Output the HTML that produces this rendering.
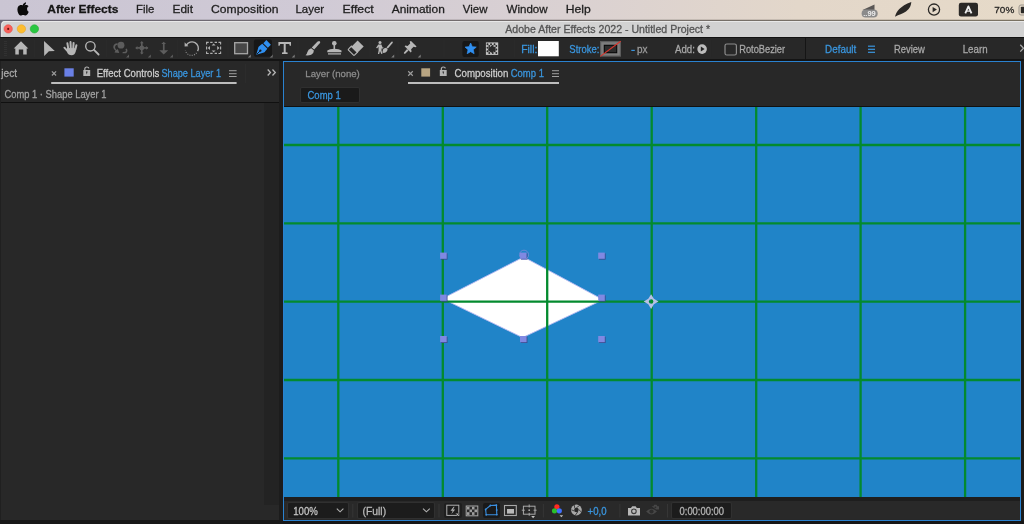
<!DOCTYPE html>
<html><head><meta charset="utf-8">
<style>
*{margin:0;padding:0;box-sizing:border-box}
html,body{width:1024px;height:524px;overflow:hidden;background:#181818;font-family:"Liberation Sans",sans-serif}
body{position:relative}
.a{position:absolute}
.ov{position:absolute;overflow:visible}
</style></head><body>

<!-- backgrounds -->
<div class="a" style="left:0;top:0;width:1024px;height:20px;background:linear-gradient(90deg,#cac5d3 0%,#d0cad6 30%,#dad1d2 55%,#e3d7ca 78%,#e6dac8 100%)"></div>
<div class="a" style="left:0;top:20px;width:1024px;height:7px;background:linear-gradient(90deg,#6e6a78,#7a7262)"></div>
<div class="a" style="left:0;top:20px;width:1024px;height:17px;background:#d2d2d2;border-top:1px solid #ededed;border-radius:5px 0 0 0"></div>
<div class="a" style="left:0;top:37px;width:1024px;height:24px;background:#282828;border-top:1px solid #121212;border-bottom:2px solid #141414"></div>

<!-- left panel -->
<div class="a" style="left:0;top:61px;width:279px;height:459px;background:#282828"></div>
<div class="a" style="left:1px;top:102px;width:278px;height:1px;background:#101010"></div>
<div class="a" style="left:264px;top:103px;width:15px;height:402px;background:#232323"></div>
<div class="a" style="left:265px;top:505px;width:14px;height:15px;background:#282828"></div>
<div class="a" style="left:245px;top:64px;width:1px;height:19px;background:#2c2c2c"></div>
<div class="a" style="left:0;top:61px;width:1px;height:463px;background:#202020"></div>

<!-- gap -->
<div class="a" style="left:279px;top:61px;width:4px;height:463px;background:#1c1c1c"></div>

<!-- comp panel -->
<div class="a" style="left:283px;top:61px;width:738px;height:460px;background:#282828;border:1px solid #2a82d0"></div>
<div class="a" style="left:1021px;top:61px;width:3px;height:463px;background:#1b1b1b"></div>
<div class="a" style="left:0;top:521px;width:1024px;height:3px;background:#161616"></div>
<div class="a" style="left:0;top:520px;width:283px;height:4px;background:#181818"></div>
<div class="a" style="left:301px;top:88px;width:58px;height:13.5px;background:#1a1a1a;border-radius:1px;box-shadow:0 0 0 1px #2f2f2f"></div>
<div class="a" style="left:284px;top:105.5px;width:736px;height:1.5px;background:#111"></div>
<!-- bottom bar -->
<div class="a" style="left:284px;top:497px;width:736px;height:22px;background:#292929;border-top:4.5px solid #1e1e1e"></div>
<div class="a" style="left:288px;top:502.7px;width:59.5px;height:15px;background:#1c1c1c;border-radius:1px;box-shadow:0 0 0 1px #303030"></div>
<div class="a" style="left:358px;top:502.7px;width:76px;height:15px;background:#1c1c1c;border-radius:1px;box-shadow:0 0 0 1px #303030"></div>
<div class="a" style="left:672.2px;top:502.9px;width:58.6px;height:15.2px;background:#1c1c1c;border-radius:1px;box-shadow:0 0 0 1px #303030"></div>
<div class="a" style="left:444px;top:503px;width:17.5px;height:15px;background:#1e1e1e;border-radius:2px"></div>
<div class="a" style="left:482.5px;top:503px;width:17px;height:15px;background:#191919;border-radius:2px"></div>

<!-- viewer -->
<div class="a" style="left:284px;top:107px;width:736px;height:390px;background:#2084c8;overflow:hidden">
  <svg class="ov" style="left:0;top:0" width="736" height="390" viewBox="284 107 736 390">
    <polygon points="445.5,297 523.6,257 599.5,297.8 599.5,301.4 522.6,337.6 445.5,300.2" fill="#ffffff" stroke="#b4b8f2" stroke-width="0.9" stroke-linejoin="round"/>
    <g stroke="#038a2e" stroke-width="2.3">
      <line x1="338.3" y1="107" x2="338.3" y2="497"/>
      <line x1="442.8" y1="107" x2="442.8" y2="497"/>
      <line x1="547.2" y1="107" x2="547.2" y2="497"/>
      <line x1="651.7" y1="107" x2="651.7" y2="497"/>
      <line x1="756.2" y1="107" x2="756.2" y2="497"/>
      <line x1="860.6" y1="107" x2="860.6" y2="497"/>
      <line x1="965.1" y1="107" x2="965.1" y2="497"/>
      <line x1="284" y1="145" x2="1020" y2="145"/>
      <line x1="284" y1="223.3" x2="1020" y2="223.3"/>
      <line x1="284" y1="301.6" x2="1020" y2="301.6"/>
      <line x1="284" y1="380" x2="1020" y2="380"/>
      <line x1="284" y1="458.3" x2="1020" y2="458.3"/>
    </g>
    <!-- handles -->
    <g><rect x="440.9" y="253.4" width="6.6" height="6.2" fill="#3a4a8c"/><rect x="440.1" y="252.6" width="6.6" height="6.2" fill="#8089e2"/><rect x="520.8" y="253.4" width="6.6" height="6.2" fill="#3a4a8c"/><rect x="520.0" y="252.6" width="6.6" height="6.2" fill="#8089e2"/><rect x="599.0" y="253.4" width="6.6" height="6.2" fill="#3a4a8c"/><rect x="598.2" y="252.6" width="6.6" height="6.2" fill="#8089e2"/><rect x="440.9" y="295.4" width="6.6" height="6.2" fill="#3a4a8c"/><rect x="440.1" y="294.6" width="6.6" height="6.2" fill="#8089e2"/><rect x="599.0" y="295.4" width="6.6" height="6.2" fill="#3a4a8c"/><rect x="598.2" y="294.6" width="6.6" height="6.2" fill="#8089e2"/><rect x="440.9" y="336.8" width="6.6" height="6.2" fill="#3a4a8c"/><rect x="440.1" y="336.0" width="6.6" height="6.2" fill="#8089e2"/><rect x="520.8" y="336.8" width="6.6" height="6.2" fill="#3a4a8c"/><rect x="520.0" y="336.0" width="6.6" height="6.2" fill="#8089e2"/><rect x="599.0" y="336.8" width="6.6" height="6.2" fill="#3a4a8c"/><rect x="598.2" y="336.0" width="6.6" height="6.2" fill="#8089e2"/></g>
    <circle cx="524" cy="254.8" r="4.6" fill="none" stroke="#7d88d8" stroke-width="0.8"/>
    <!-- anchor point -->
    <path fill-rule="evenodd" fill="#b9c0e6" d="M651.1 294.2 L653.9 298.75 L658.5 301.55 L653.9 304.35 L651.1 308.9 L648.3 304.35 L643.7 301.55 L648.3 298.75 Z M653.4 301.55 A2.3 2.3 0 1 0 648.8 301.55 A2.3 2.3 0 1 0 653.4 301.55 Z"/>
  </svg>
</div>

<!-- ICONS OVERLAY -->
<svg class="ov" style="left:0;top:0;will-change:transform" width="1024" height="524" viewBox="0 0 1024 524">
  <!-- apple logo -->
  <path transform="translate(18,2.2) scale(0.93)" d="M8.6 0c0.1 1.1-0.3 2.1-1 2.8-0.6 0.7-1.6 1.2-2.5 1.1-0.1-1 0.4-2 1-2.6C6.8 0.6 7.8 0.1 8.6 0zM11.6 10.4c-0.3 0.8-0.5 1.1-0.9 1.8-0.6 1-1.5 2.2-2.6 2.2-1 0-1.2-0.6-2.5-0.6-1.3 0-1.6 0.6-2.6 0.6-1.1 0-1.9-1.1-2.5-2.1C-0.9 9.6-1.1 6.3 0.4 4.4 1.1 3.5 2.2 2.9 3.3 2.9c1.1 0 1.8 0.6 2.7 0.6 0.9 0 1.4-0.6 2.7-0.6 1 0 2 0.5 2.7 1.4-2.4 1.3-2 4.8 0.2 6.1z" fill="#0a0a0a"/>
  <!-- status icons -->
  <path d="M862.5 10 L874.5 4.5 L874.5 10 Z" fill="#5a5755"/>
  <rect x="861.6" y="9.4" width="16.1" height="8.2" rx="4.1" fill="#8b8b8b"/>
  <text x="869.5" y="16.2" font-size="7.5" font-weight="bold" fill="#eeeeee" text-anchor="middle" font-family="Liberation Sans">..99</text>
  <path d="M895 16.8 C896 12 900 6 911.3 2 C911 5.5 910 8.5 906 11.5 C902.5 14 899 14.5 895 16.8 Z" fill="#2a2826"/>
  <circle cx="934" cy="9.6" r="5.6" fill="none" stroke="#2a2826" stroke-width="1.3"/>
  <path d="M932.6 6.9 L936.9 9.6 L932.6 12.3 Z" fill="#2a2826"/>
  <rect x="958.8" y="2.7" width="19.2" height="13.7" rx="2.2" fill="#2a2826"/>
  <path d="M965.3 13.4 L968.4 6.4 L971.5 13.4" fill="none" stroke="#eeeeee" stroke-width="1.8" stroke-linejoin="round"/>
  <path d="M966.6 11.1 h3.6" stroke="#eeeeee" stroke-width="1.2"/>
  <rect x="1019" y="5" width="10" height="10" rx="2" fill="none" stroke="#9a948c" stroke-width="1"/>
  <rect x="1020.8" y="6.8" width="6" height="6.4" rx="0.8" fill="#2a2826"/>

  <defs><linearGradient id="mbl" x1="0" x2="1"><stop offset="0" stop-color="#6c6876"/><stop offset="1" stop-color="#7a7262"/></linearGradient></defs>
  <path d="M0 19.85 H1024 V20.9 H5 Q1.2 20.9 1.2 25 V37 H0 Z" fill="url(#mbl)"/>
  <path d="M5 20.9 H1024 V21.9 H5.5 Q2.2 21.9 2.2 25 V37 H1.2 V25 Q1.2 20.9 5 20.9 Z" fill="#e8e8e8"/>
  <!-- traffic lights -->
  <circle cx="8.2" cy="28.9" r="4.2" fill="#f9605a" stroke="#e0463f" stroke-width="0.5"/>
  <circle cx="8.2" cy="28.9" r="1.05" fill="#6a100a"/>
  <circle cx="21.4" cy="28.9" r="4.2" fill="#fdbd2f" stroke="#e0a124" stroke-width="0.5"/>
  <circle cx="34.4" cy="28.9" r="4.2" fill="#29c741" stroke="#1ea730" stroke-width="0.5"/>

  <!-- toolbar separators -->
  <g fill="#2a2a2a">
    <rect x="34" y="40" width="1" height="17"/>
    <rect x="106" y="40" width="1" height="17"/>
    <rect x="177" y="40" width="1" height="17"/>
    <rect x="227.5" y="40" width="1" height="17"/>
    <rect x="297.5" y="40" width="1" height="17"/>
    <rect x="369.5" y="40" width="1" height="17"/>
    <rect x="397.5" y="40" width="1" height="17"/>
    <rect x="443.5" y="40" width="1" height="17"/>
    <rect x="514" y="40" width="1" height="17"/>
    <rect x="710.3" y="40" width="1" height="17"/>
  </g>
  <rect x="805" y="38" width="1" height="21" fill="#151515"/>
  <!-- gripper -->
  <g fill="#343434">
    <rect x="4" y="41" width="3" height="0.8"/><rect x="4" y="43" width="3" height="0.8"/><rect x="4" y="45" width="3" height="0.8"/>
    <rect x="4" y="47" width="3" height="0.8"/><rect x="4" y="49" width="3" height="0.8"/><rect x="4" y="51" width="3" height="0.8"/>
    <rect x="4" y="53" width="3" height="0.8"/><rect x="4" y="55" width="3" height="0.8"/>
  </g>

  <g fill="#b6b6b6">
    <!-- home -->
    <path d="M21 41.3 L28.3 48.4 L26.7 48.4 L26.7 54.5 L23.2 54.5 L23.2 49.4 L18.8 49.4 L18.8 54.5 L15.3 54.5 L15.3 48.4 L13.7 48.4 Z"/>
    <!-- arrow -->
    <path d="M44 40.9 L54.8 50.9 L48.9 51.2 L44.2 55.9 Z"/>
    <!-- hand -->
    <path d="M66.8 48 L75.9 48.3 L75.7 51.5 Q75 55.2 71.5 55.2 Q68.2 55.2 67 52 Z"/>
  </g>
  <g stroke="#b6b6b6" stroke-width="2" stroke-linecap="round" fill="none">
    <path d="M67.4 43.3 L68.3 48.8 M70.5 42.1 L70.8 48.8 M73.6 42.9 L73.2 48.8 M76.4 45.3 L75.3 49.8 M64.4 47.7 L67.6 51.2"/>
</g>
  <!-- magnifier -->
  <circle cx="90.4" cy="46.3" r="4.7" fill="none" stroke="#b6b6b6" stroke-width="1.4"/>
  <line x1="94" y1="49.9" x2="98.6" y2="54.5" stroke="#b6b6b6" stroke-width="1.8" stroke-linecap="round"/>

  <!-- dim icons -->
  <g fill="#5d5d5d" stroke="none">
    <circle cx="121" cy="45.2" r="3.4"/>
    <path d="M126.7 48.5 Q128.5 51.2 126 53.2 L122.5 53.3 L122.7 52 L125.3 51.8 Q126.5 50.8 125.5 49.3 Z"/>
    <path d="M117.6 43.3 Q113 43.5 113.3 47.5 Q113.7 49.5 115.5 50.6 L114.5 52.6 L119.3 53 L117.8 49 L116.6 50 Q114.8 48.7 115 47 Q115.3 44.8 117.8 44.8 Z"/>
    <!-- move -->
    <circle cx="141.8" cy="47.9" r="2.4"/>
    <rect x="141" y="42.5" width="1.6" height="11"/>
    <rect x="136.5" y="47.1" width="11" height="1.6"/>
    <path d="M141.8 41 L139.9 43.2 L143.7 43.2 Z M141.8 54.6 L139.9 52.4 L143.7 52.4 Z M135.2 47.9 L137.4 46 L137.4 49.8 Z M148.4 47.9 L146.2 46 L146.2 49.8 Z"/>
    <!-- z arrow -->
    <rect x="162.9" y="43.5" width="1.7" height="7.5"/>
    <path d="M163.7 41.8 L161.3 44 L166.1 44 Z"/>
    <path d="M159.3 50.2 L168.2 50.2 L163.7 54.6 Z"/>
    <!-- corner triangles dim -->
    <path d="M129 54.4 L129 57.4 L126 57.4 Z M150.8 54.4 L150.8 57.4 L147.8 57.4 Z M172.9 54.4 L172.9 57.4 L169.9 57.4 Z"/>
  </g>

  <!-- rotation -->
  <path d="M186.4 45.2 A6.3 6.3 0 1 1 197.6 51.2" fill="none" stroke="#b0b0b0" stroke-width="1.4"/>
  <path d="M184.6 42.2 L188.4 46.2 L184.6 46.6 Z" fill="#b0b0b0"/>
  <path d="M196.6 52.8 A6.3 6.3 0 0 1 185.4 50.6" fill="none" stroke="#8a8a8a" stroke-width="1.2" stroke-dasharray="1 1.3"/>
  <!-- pan behind -->
  <g fill="none" stroke="#b0b0b0" stroke-width="1.15">
    <path d="M206.6 44.4V42.3H208.7 M218.5 42.3H220.6V44.4 M220.6 51.4V53.5H218.5 M208.7 53.5H206.6V51.4"/>
    <path d="M210.2 42.4H212.6 M214.6 42.4H217 M210.2 53.4H212.6 M214.6 53.4H217 M206.6 46.4V49.4 M220.6 46.4V49.4"/>
  </g>
  <g fill="#b0b0b0">
    <path d="M213.6 43.5 L211.6 45.4 L215.6 45.4 Z M213.6 52.3 L211.6 50.4 L215.6 50.4 Z"/>
    <path d="M207.7 47.9 L210 45.9 L210 49.9 Z M219.5 47.9 L217.2 45.9 L217.2 49.9 Z"/>
  </g>
  <!-- rect tool -->
  <rect x="234.7" y="42.7" width="12.8" height="11" fill="#474747" stroke="#a8a8a8" stroke-width="1.3"/>
  <g fill="#7c7c7c">
    <path d="M250.8 54.4 L250.8 57.4 L247.8 57.4 Z M272.6 54.4 L272.6 57.4 L269.6 57.4 Z M294.7 54.4 L294.7 57.4 L291.7 57.4 Z M394.2 54.4 L394.2 57.4 L391.2 57.4 Z M420.7 54.4 L420.7 57.4 L417.7 57.4 Z"/>
  </g>
  <!-- pen selected -->
  <rect x="253.9" y="39.5" width="18.1" height="17.3" rx="2" fill="#171717"/>
  <g transform="translate(256.4,54.6) rotate(45)">
    <path d="M0 0.2 L-3.9 -6.8 Q-4.1 -7.9 -3.8 -9 L-3.6 -11.9 H3.6 L3.8 -9 Q4.1 -7.9 3.9 -6.8 Z" fill="#2f8ff0"/>
    <rect x="-3.2" y="-17.3" width="6.4" height="4.3" fill="#2f8ff0"/>
    <line x1="0" y1="-0.6" x2="0" y2="-5" stroke="#171717" stroke-width="0.9"/>
    <circle cx="0" cy="-5.6" r="1.15" fill="#171717"/>
  </g>
  <!-- type tool T -->
  <g fill="#b6b6b6">
    <path d="M278.4 42 H291 V45.8 H289.8 L289.2 43.9 H285.7 V52.3 L287.6 52.5 V54.1 H282 V52.5 L283.7 52.3 V43.9 H280.2 L279.6 45.8 H278.4 Z"/>
    <!-- brush -->
    <path d="M319.3 40.9 Q320.8 41.6 320 43 L314.2 49.4 L311.8 47.6 L317.6 41.5 Z"/>
    <path d="M311.2 48.3 L313.9 50.4 Q313.9 53.4 311.2 54.8 Q308.3 55.7 305.5 55.3 Q307 54 307.3 52.2 Q308 49.2 311.2 48.3 Z"/>
    <!-- stamp -->
    <circle cx="334.3" cy="43.3" r="2.3"/>
    <rect x="333.5" y="44.8" width="1.6" height="4.4"/>
    <path d="M330 49.3 Q334.3 48.3 338.6 49.3 L341.5 50.6 V52.2 H327.3 V50.6 Z"/>
    <rect x="328" y="53.3" width="13" height="1.2"/>
    <!-- eraser -->
    <path d="M357.6 40.4 L363.7 46.5 L357.2 53 L351.1 46.9 Z"/>
    <!-- pin -->
    <path d="M411 41 L416.6 46.6 L415.5 47.3 L413.6 46.8 L411.1 49.3 L411.6 51.5 L410.7 52.4 L404.6 46.3 L405.5 45.4 L407.6 45.9 L410.2 43.4 L409.7 41.4 Z"/>
    <path d="M407.1 49 L408.5 50.4 L405.2 53.7 Q404.4 54 404 53.6 Q403.7 53.1 404 52.4 Z"/>
  </g>
  <path d="M350.6 47.4 L356.7 53.5 L353.7 56.5 Q353.2 57 352.7 56.5 L347.7 51.5 Q347.2 51 347.7 50.5 Z" fill="none" stroke="#b6b6b6" stroke-width="1.1" transform="translate(0.8,-1.3)"/>
  <!-- roto brush -->
  <g fill="#b6b6b6">
    <circle cx="380" cy="42.5" r="1.5"/>
    <path d="M378.3 44.6 H381.4 L382.6 47.5 L383.5 47.2 L383.2 48.4 L381.6 48.4 L381.5 50.5 L382.5 53.8 L381.3 54 L380 51 L379.2 54 L377.9 53.9 L378.6 50.5 L378.5 46.5 L377.4 48.3 L376 47.9 Z"/>
    <path d="M392.4 41.5 Q393.2 42 392.6 43 L387.9 48.6 L386.5 47.4 L391.4 41.8 Z"/>
    <path d="M386.1 47.8 L387.6 49.1 Q387.7 51.5 385.5 52.6 Q383.5 53.3 382.4 52.6 Q382.6 50.5 383.3 49.2 Q384.2 48 386.1 47.8 Z"/>
  </g>
  <!-- star selected -->
  <rect x="462.4" y="41" width="16.4" height="16.1" rx="2" fill="#171717"/>
  <path d="M470.65 43.00 L472.27 46.68 L476.26 47.08 L473.27 49.75 L474.12 53.67 L470.65 51.65 L467.18 53.67 L468.03 49.75 L465.04 47.08 L469.03 46.68 Z" fill="#2f8ff0" stroke="#2f8ff0" stroke-width="0.7" stroke-linejoin="round"/>
  <!-- mask checker -->
  <rect x="485.9" y="42.4" width="12.3" height="12.5" fill="#c2c2c2"/>
  <g fill="#2a2a2a"><circle cx="487.50" cy="44.20" r="0.98"/><circle cx="491.02" cy="44.20" r="0.98"/><circle cx="494.54" cy="44.20" r="0.98"/><circle cx="489.26" cy="45.98" r="0.98"/><circle cx="492.78" cy="45.98" r="0.98"/><circle cx="496.30" cy="45.98" r="0.98"/><circle cx="487.50" cy="47.76" r="0.98"/><circle cx="491.02" cy="47.76" r="0.98"/><circle cx="494.54" cy="47.76" r="0.98"/><circle cx="489.26" cy="49.54" r="0.98"/><circle cx="492.78" cy="49.54" r="0.98"/><circle cx="496.30" cy="49.54" r="0.98"/><circle cx="487.50" cy="51.32" r="0.98"/><circle cx="491.02" cy="51.32" r="0.98"/><circle cx="494.54" cy="51.32" r="0.98"/><circle cx="489.26" cy="53.10" r="0.98"/><circle cx="492.78" cy="53.10" r="0.98"/><circle cx="496.30" cy="53.10" r="0.98"/>
    <path d="M492 45.2 L493.6 47 L495.6 47.3 L495.4 49.3 L495.6 51.2 L493.6 51.5 L492 53 L490.3 51.5 L488.4 51.2 L488.6 49.3 L488.4 47.3 L490.3 47 Z"/>
  </g>
  <!-- fill swatch -->
  <rect x="538" y="41" width="20.8" height="15.3" fill="#ffffff"/>
  <!-- stroke swatch -->
  <rect x="600" y="41" width="21" height="15.7" fill="#5c5c5c"/>
  <rect x="601.2" y="42.2" width="18.6" height="13.3" fill="#7e7e7e"/>
  <rect x="604.3" y="45.3" width="12.4" height="7.4" fill="#2c2c2c" stroke="#080808" stroke-width="1.1"/>
  <line x1="600.3" y1="56.4" x2="620.7" y2="41.3" stroke="#d9342c" stroke-width="1.15"/>
  <!-- blue dash -->
  <rect x="631.3" y="49.8" width="3.5" height="1.2" fill="#3a96df"/>
  <!-- add play -->
  <circle cx="702.1" cy="49.1" r="4.8" fill="#bdbdbd"/>
  <path d="M700.8 46.6 L704.6 49.1 L700.8 51.6 Z" fill="#232323"/>
  <!-- checkbox -->
  <rect x="725" y="44" width="11.4" height="11" rx="1.8" fill="none" stroke="#8c8c8c" stroke-width="1.2"/>
  <!-- workspace hamburger -->
  <g fill="#3a96df">
    <rect x="868" y="45.6" width="7" height="1.2"/><rect x="868" y="48.7" width="7" height="1.2"/><rect x="868" y="51.7" width="7" height="1.2"/>
  </g>
  <!-- >> right -->
  <path d="M1020.3 44.8 L1023.5 48.2 L1020.3 51.6" fill="none" stroke="#a8a8a8" stroke-width="1.3"/>

  <!-- panel tabs -->
  <path d="M51.9 71.3 L56.1 75.5 M56.1 71.3 L51.9 75.5" stroke="#9c9c9c" stroke-width="1.2"/>
  <rect x="64.4" y="68.3" width="9.3" height="8.3" fill="#6a80e6"/>
  <path d="M83.3 70 H90.2 V76 H83.3 Z" fill="#b4b4b4"/>
  <path d="M84.8 70.2 V68.9 Q84.8 67 86.89999999999999 67 Q88.6 67 88.89999999999999 68.4" fill="none" stroke="#b4b4b4" stroke-width="1.2"/>
  <path d="M85.89999999999999 71.4 H87.6 L86.75 74.6 Z" fill="#282828"/>
  <rect x="51.2" y="82" width="185.4" height="2" fill="#bdbdbd"/>
  <g fill="#a0a0a0">
    <rect x="229" y="70.2" width="7.6" height="1"/><rect x="229" y="73.2" width="7.6" height="1"/><rect x="229" y="76" width="7.6" height="1"/>
  </g>
  <path d="M267.7 69.5 L270.5 72.5 L267.7 75.5 M272.5 69.5 L275.3 72.5 L272.5 75.5" fill="none" stroke="#b6b6b6" stroke-width="1.3"/>

  <path d="M408.2 71.3 L412.8 75.7 M412.8 71.3 L408.2 75.7" stroke="#9c9c9c" stroke-width="1.2"/>
  <rect x="421.3" y="68.3" width="8.8" height="8.3" fill="#b8a582"/>
  <path d="M439.8 70 H446.7 V76 H439.8 Z" fill="#b4b4b4"/>
  <path d="M441.3 70.2 V68.9 Q441.3 67 443.40000000000003 67 Q445.1 67 445.40000000000003 68.4" fill="none" stroke="#b4b4b4" stroke-width="1.2"/>
  <path d="M442.4 71.4 H444.1 L443.25 74.6 Z" fill="#282828"/>
  <rect x="408" y="82" width="151" height="2" fill="#bdbdbd"/>
  <g fill="#a0a0a0">
    <rect x="552" y="70.2" width="7" height="1"/><rect x="552" y="73.2" width="7" height="1"/><rect x="552" y="76" width="7" height="1"/>
  </g>

  <!-- bottom bar -->
  <path d="M336.8 508.6 L340.1 511.8 L343.4 508.6" fill="none" stroke="#b0b0b0" stroke-width="1.1"/>
  <path d="M423 508.6 L426.4 511.8 L429.8 508.6" fill="none" stroke="#b0b0b0" stroke-width="1.1"/>
  <g fill="#363636">
    <rect x="352.3" y="504" width="1" height="13.5"/><rect x="438.5" y="504" width="1" height="13.5"/>
    <rect x="542.8" y="504" width="1" height="13.5"/><rect x="619.4" y="504" width="1" height="13.5"/>
    <rect x="667" y="504" width="1" height="13.5"/>
  </g>
  <!-- fast preview monitor -->
  <rect x="446.8" y="505.2" width="12" height="10.2" fill="none" stroke="#b0b0b0" stroke-width="1"/>
  <path d="M453.6 506.8 L450.5 510.8 L452.7 510.8 L451.4 514 L455.2 509.6 L453 509.6 L454.6 506.8 Z" fill="#b0b0b0"/>
  <path d="M455.2 513.2 L459.6 513.2 L457.4 515.6 Z" fill="#c8c8c8" stroke="#1e1e1e" stroke-width="0.6"/>
  <!-- checker -->
  <rect x="466.2" y="506" width="11.6" height="9.8" fill="none" stroke="#a8a8a8" stroke-width="1"/>
  <g fill="#a0a0a0">
    <rect x="467" y="506.8" width="2.5" height="2.7"/><rect x="472" y="506.8" width="2.5" height="2.7"/>
    <rect x="469.5" y="509.5" width="2.5" height="2.7"/><rect x="474.5" y="509.5" width="2.5" height="2.7"/>
    <rect x="467" y="512.2" width="2.5" height="2.7"/><rect x="472" y="512.2" width="2.5" height="2.7"/>
  </g>
  <!-- mask path selected -->
  <path d="M485.6 509.4 L490.4 505.5 L496.4 505.2 L496.8 514.6 L486.2 514.8 Z" fill="none" stroke="#3a8fe0" stroke-width="1.1"/>
  <g fill="#3a8fe0">
    <circle cx="485.6" cy="509.4" r="0.9"/><circle cx="490.4" cy="505.5" r="0.9"/><circle cx="496.4" cy="505.2" r="0.9"/>
    <circle cx="496.7" cy="510" r="0.9"/><circle cx="496.8" cy="514.6" r="0.9"/><circle cx="486.2" cy="514.8" r="0.9"/>
  </g>
  <!-- monitor 4 -->
  <rect x="504.5" y="505.5" width="11.8" height="10" fill="none" stroke="#a8a8a8" stroke-width="1.1"/>
  <rect x="507" y="509" width="7" height="4.6" fill="#b8b8b8"/>
  <!-- safe margins -->
  <rect x="523.4" y="506.2" width="11.6" height="8" fill="none" stroke="#a8a8a8" stroke-width="1"/>
  <path d="M529.2 504.5V507.5 M529.2 512.8V515.8 M521.8 510.2H524.8 M533.6 510.2H536.6" stroke="#a8a8a8" stroke-width="1"/>
  <circle cx="529.2" cy="510.2" r="0.9" fill="#a8a8a8"/>
  <path d="M531.2 516 L535 516 L533.1 518.2 Z" fill="#c0c0c0"/>
  <!-- RGB -->
  <circle cx="556.9" cy="506.8" r="2.6" fill="#ff2a20"/>
  <circle cx="554.5" cy="510.8" r="2.6" fill="#2ac02a"/>
  <circle cx="559.3" cy="510.8" r="2.6" fill="#4070ff"/>
  <path d="M559.5 515.2 L563.2 515.2 L561.35 517.3 Z" fill="#c0c0c0"/>
  <!-- aperture -->
  <circle cx="576.4" cy="510" r="5.4" fill="#a8a8a8"/>
  <circle cx="576.4" cy="510" r="2.2" fill="#292929"/>
  <g stroke="#292929" stroke-width="0.8">
    <path d="M576.4 507.8 L579.6 505.4 M578.5 509.3 L581.3 512 M577.7 512 L575.2 515.3 M574.4 511 L571.4 509.8 M574.8 508.2 L574.2 504.8"/>
  </g>
  <!-- camera -->
  <path d="M628 508 H631 L632.2 506.2 H635.6 L636.8 508 H640 V515.6 H628 Z" fill="#b8b8b8"/>
  <circle cx="633.9" cy="511.3" r="2.3" fill="none" stroke="#3a3a3a" stroke-width="1.1"/>
  <!-- eye dim -->
  <path d="M646.1 511.6 Q651.3 505.8 657 511.6 Q651.3 517.2 646.1 511.6 Z" fill="#474747"/>
  <circle cx="651.5" cy="511.5" r="2.1" fill="#2c2c2c"/>
  <path d="M651.6 506.2 H653.4 L654.2 504.8 H656.6 L657.4 506.2 H659 V509.6 H656 Z" fill="#474747"/>
  <circle cx="655.4" cy="507.3" r="0.9" fill="#2c2c2c"/>
</svg>

<svg class="ov" width="1024" height="524" viewBox="0 0 1024 524" style="left:0;top:0;will-change:transform;font-family:'Liberation Sans',sans-serif"><text x="47.26" y="12.90" font-size="11.43" textLength="71.17" lengthAdjust="spacingAndGlyphs" fill="#161616" stroke="#161616" stroke-width="0.28" font-weight="bold">After Effects</text><text x="136.09" y="12.90" font-size="11.59" textLength="18.32" lengthAdjust="spacingAndGlyphs" fill="#1e1e1e" stroke="#1e1e1e" stroke-width="0.28">File</text><text x="172.55" y="12.90" font-size="11.59" textLength="20.42" lengthAdjust="spacingAndGlyphs" fill="#1e1e1e" stroke="#1e1e1e" stroke-width="0.28">Edit</text><text x="211.09" y="12.90" font-size="11.59" textLength="67.29" lengthAdjust="spacingAndGlyphs" fill="#1e1e1e" stroke="#1e1e1e" stroke-width="0.28">Composition</text><text x="295.38" y="12.90" font-size="11.59" textLength="28.77" lengthAdjust="spacingAndGlyphs" fill="#1e1e1e" stroke="#1e1e1e" stroke-width="0.28">Layer</text><text x="342.51" y="12.90" font-size="11.59" textLength="31.26" lengthAdjust="spacingAndGlyphs" fill="#1e1e1e" stroke="#1e1e1e" stroke-width="0.28">Effect</text><text x="391.80" y="12.90" font-size="11.59" textLength="52.97" lengthAdjust="spacingAndGlyphs" fill="#1e1e1e" stroke="#1e1e1e" stroke-width="0.28">Animation</text><text x="462.80" y="12.90" font-size="11.59" textLength="24.61" lengthAdjust="spacingAndGlyphs" fill="#1e1e1e" stroke="#1e1e1e" stroke-width="0.28">View</text><text x="506.50" y="12.90" font-size="11.59" textLength="41.11" lengthAdjust="spacingAndGlyphs" fill="#1e1e1e" stroke="#1e1e1e" stroke-width="0.28">Window</text><text x="565.73" y="12.90" font-size="11.59" textLength="25.01" lengthAdjust="spacingAndGlyphs" fill="#1e1e1e" stroke="#1e1e1e" stroke-width="0.28">Help</text><text x="994.30" y="12.90" font-size="9.71" textLength="19.99" lengthAdjust="spacingAndGlyphs" fill="#2a2826" stroke="#2a2826" stroke-width="0.28">70%</text><text x="505.30" y="32.50" font-size="10.29" textLength="204.80" lengthAdjust="spacingAndGlyphs" fill="#545454" stroke="#545454" stroke-width="0.28">Adobe After Effects 2022 - Untitled Project *</text><text x="521.16" y="53.10" font-size="10.72" textLength="16.25" lengthAdjust="spacingAndGlyphs" fill="#3a96df" stroke="#3a96df" stroke-width="0.28">Fill:</text><text x="569.32" y="53.10" font-size="10.72" textLength="30.12" lengthAdjust="spacingAndGlyphs" fill="#3a96df" stroke="#3a96df" stroke-width="0.28">Stroke:</text><text x="636.90" y="53.10" font-size="10.72" textLength="10.50" lengthAdjust="spacingAndGlyphs" fill="#9c9c9c" stroke="#9c9c9c" stroke-width="0.28">px</text><text x="675.00" y="53.10" font-size="10.72" textLength="19.85" lengthAdjust="spacingAndGlyphs" fill="#a8a8a8" stroke="#a8a8a8" stroke-width="0.28">Add:</text><text x="739.26" y="53.10" font-size="10.72" textLength="45.86" lengthAdjust="spacingAndGlyphs" fill="#a8a8a8" stroke="#a8a8a8" stroke-width="0.28">RotoBezier</text><text x="825.11" y="53.00" font-size="11.01" textLength="31.17" lengthAdjust="spacingAndGlyphs" fill="#3a96df" stroke="#3a96df" stroke-width="0.28">Default</text><text x="893.95" y="53.00" font-size="11.01" textLength="30.78" lengthAdjust="spacingAndGlyphs" fill="#a8a8a8" stroke="#a8a8a8" stroke-width="0.28">Review</text><text x="962.72" y="53.00" font-size="11.01" textLength="24.82" lengthAdjust="spacingAndGlyphs" fill="#a8a8a8" stroke="#a8a8a8" stroke-width="0.28">Learn</text><text x="1.30" y="76.80" font-size="10.58" textLength="15.68" lengthAdjust="spacingAndGlyphs" fill="#a8a8a8" stroke="#a8a8a8" stroke-width="0.28">ject</text><text x="96.73" y="76.80" font-size="10.58" textLength="62.65" lengthAdjust="spacingAndGlyphs" fill="#cdcdcd" stroke="#cdcdcd" stroke-width="0.28">Effect Controls</text><text x="161.43" y="76.80" font-size="10.58" textLength="59.59" lengthAdjust="spacingAndGlyphs" fill="#3a96df" stroke="#3a96df" stroke-width="0.28">Shape Layer 1</text><text x="4.53" y="97.60" font-size="10.00" textLength="101.90" lengthAdjust="spacingAndGlyphs" fill="#a2a2a2" stroke="#a2a2a2" stroke-width="0.28">Comp 1 · Shape Layer 1</text><text x="305.33" y="76.60" font-size="9.86" textLength="54.48" lengthAdjust="spacingAndGlyphs" fill="#8c8c8c" stroke="#8c8c8c" stroke-width="0.28">Layer (none)</text><text x="454.52" y="76.80" font-size="10.58" textLength="53.83" lengthAdjust="spacingAndGlyphs" fill="#cdcdcd" stroke="#cdcdcd" stroke-width="0.28">Composition</text><text x="510.78" y="76.80" font-size="10.58" textLength="33.16" lengthAdjust="spacingAndGlyphs" fill="#3a96df" stroke="#3a96df" stroke-width="0.28">Comp 1</text><text x="307.53" y="98.60" font-size="10.58" textLength="33.21" lengthAdjust="spacingAndGlyphs" fill="#3a96df" stroke="#3a96df" stroke-width="0.28">Comp 1</text><text x="293.23" y="514.90" font-size="10.29" textLength="24.55" lengthAdjust="spacingAndGlyphs" fill="#c4c4c4" stroke="#c4c4c4" stroke-width="0.28">100%</text><text x="362.48" y="514.90" font-size="10.29" textLength="23.67" lengthAdjust="spacingAndGlyphs" fill="#b8b8b8" stroke="#b8b8b8" stroke-width="0.28">(Full)</text><text x="587.62" y="515.00" font-size="10.14" textLength="18.93" lengthAdjust="spacingAndGlyphs" fill="#3a96df" stroke="#3a96df" stroke-width="0.28">+0,0</text><text x="679.52" y="514.60" font-size="10.14" textLength="44.57" lengthAdjust="spacingAndGlyphs" fill="#b4b4b4" stroke="#b4b4b4" stroke-width="0.28">0:00:00:00</text></svg>
</body></html>
